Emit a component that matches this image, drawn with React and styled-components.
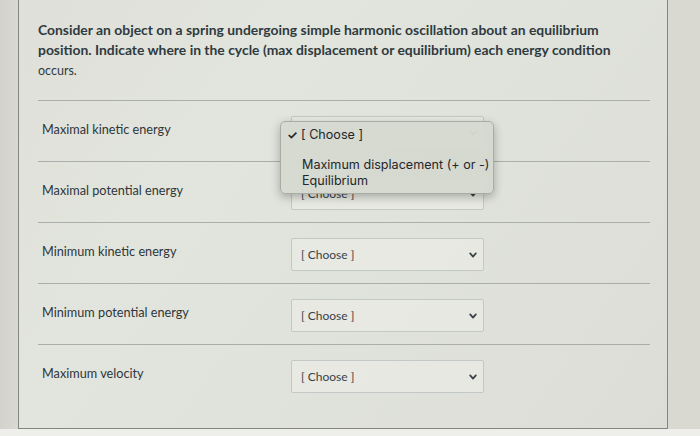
import * as React from "react";
import styled, { createGlobalStyle } from "styled-components";

const GlobalStyle = createGlobalStyle`
  html, body {
    margin: 0;
    padding: 0;
    height: 436px;
    overflow: hidden;
    background: #d7d7d0;
  }
  * {
    box-sizing: border-box;
  }
`;

const ITEMS = [
  "Maximal kinetic energy",
  "Maximal potential energy",
  "Minimum kinetic energy",
  "Minimum potential energy",
  "Maximum velocity",
];

const OPTIONS = ["Maximum displacement (+ or -)", "Equilibrium"];

const Screen = styled.div`
  width: 700px;
  height: 436px;
  display: flex;
  flex-direction: column;
  background: linear-gradient(90deg, #d3d2cc 0, #d9d9d2 18px, #d9d9d2 100%);
`;

const Panel = styled.div`
  margin: -1px 0 0 18px;
  width: 650px;
  height: 430px;
  border: 1px solid #83857f;
  border-top: none;
  padding: 21px 17px 0 19px;
  background: linear-gradient(
    125deg,
    #dfe0d9 0%,
    #e2e5dd 30%,
    #e0e3dc 55%,
    #dcddd6 100%
  );
`;

const Bottom = styled.div`
  flex: 1;
  background: #eeeeea;
`;

const Question = styled.p`
  margin: 0;
  font-family: Lato, "Liberation Sans", sans-serif;
  font-weight: 700;
  font-size: 13.9px;
  line-height: 20px;
  color: #2f3a40;
  max-width: 600px;
`;

const Occurs = styled.span`
  font-weight: 400;
  font-size: 12.5px;
`;

const Rows = styled.div`
  margin-top: 19px;
`;

const Row = styled.div`
  position: relative;
  display: flex;
  align-items: flex-start;
  height: 61px;
  padding-top: 15px;
  border-top: 1px solid #a9aeaa;
`;

const Label = styled.div`
  width: 253px;
  padding: 5px 0 0 4px;
  font-family: Lato, "Liberation Sans", sans-serif;
  font-size: 12.7px;
  line-height: 16px;
  color: #2e363b;
`;

const Select = styled.div`
  width: 193px;
  height: 33px;
  display: flex;
  align-items: center;
  justify-content: space-between;
  padding: 0 6px 0 9px;
  border: 1px solid #c2c8c6;
  border-radius: 2px;
  background: rgba(236, 238, 232, 0.55);
  font-family: Lato, "Liberation Sans", sans-serif;
  font-size: 12px;
  color: #3a4247;
`;

const Chevron = styled.svg`
  width: 8px;
  height: 8px;
`;

const Menu = styled.div`
  position: absolute;
  left: 242px;
  top: 20px;
  width: 214px;
  height: 73px;
  padding: 5px 0 0 6px;
  border: 1px solid #a9aba5;
  border-radius: 5px;
  background: rgba(214, 217, 208, 0.97);
  box-shadow: 0 3px 10px rgba(0, 0, 0, 0.28);
  font-family: Inter, "Noto Sans", sans-serif;
  font-size: 12.6px;
  color: #23272a;
  z-index: 2;
`;

const MenuItem = styled.div`
  display: flex;
  align-items: center;
  height: 16px;
  line-height: 16px;
  padding-left: ${(p) => (p.checked ? "0" : "15px")};
  margin-top: ${(p) => (p.gap ? "14px" : "0")};
`;

const Check = styled.span`
  width: 14px;
  font-size: 12px;
  font-weight: 700;
`;

const ChevronIcon = () => (
  <Chevron viewBox="0 0 10 10">
    <path
      d="M1.5 3 L5 7 L8.5 3"
      fill="none"
      stroke="#3a4247"
      strokeWidth="2.2"
      strokeLinecap="round"
      strokeLinejoin="round"
    />
  </Chevron>
);

const App = () => (
  <>
    <GlobalStyle />
    <Screen>
      <Panel>
        <Question>
          Consider an object on a spring undergoing simple harmonic oscillation
          about an equilibrium position. Indicate where in the cycle (max
          displacement or equilibrium) each energy condition{" "}
          <Occurs>occurs.</Occurs>
        </Question>
        <Rows>
          {ITEMS.map((item, index) => (
            <Row key={item}>
              <Label>{item}</Label>
              <Select>
                <span>[ Choose ]</span>
                <ChevronIcon />
              </Select>
              {index === 0 && (
                <Menu>
                  <MenuItem checked>
                    <Check>✓</Check>[ Choose ]
                  </MenuItem>
                  {OPTIONS.map((option, i) => (
                    <MenuItem key={option} gap={i === 0}>
                      {option}
                    </MenuItem>
                  ))}
                </Menu>
              )}
            </Row>
          ))}
        </Rows>
      </Panel>
      <Bottom />
    </Screen>
  </>
);

export default App;
